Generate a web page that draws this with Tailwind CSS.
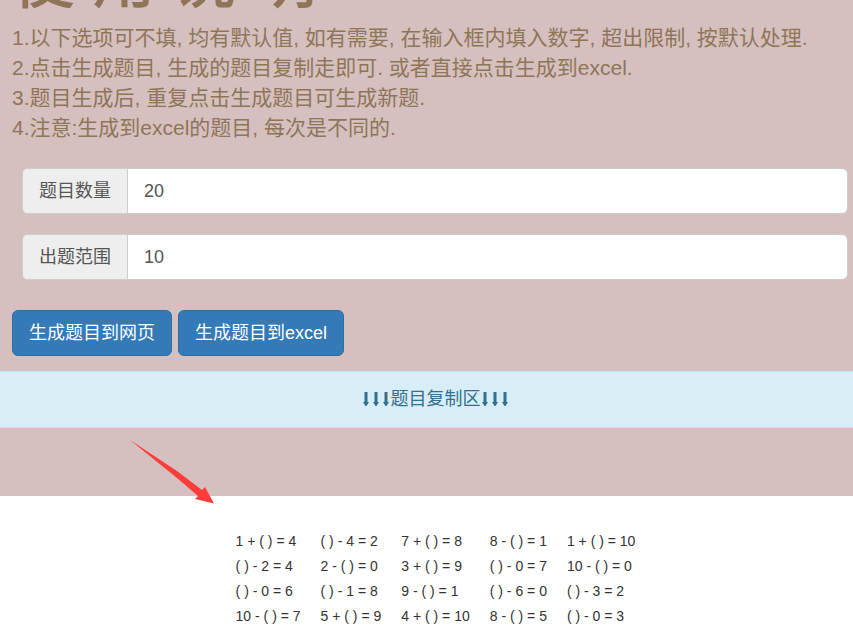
<!DOCTYPE html>
<html lang="zh-CN">
<head>
  <meta charset="UTF-8">
  <meta name="viewport" content="width=device-width, initial-scale=1.0">
  <title>使用说明</title>
  <script src="https://cdn.jsdelivr.net/npm/@tailwindcss/browser@4"></script>
</head>
<body class="bg-white overflow-hidden font-['Liberation_Sans','Noto_Sans_CJK_SC',sans-serif] text-[#333]">
  <main class="relative bg-[#d5c0bf] pb-[68px]">
    <header class="px-3 text-[#8f7558]">
      <div class="h-[23px] overflow-hidden flex items-end">
        <h1 class="pb-2 text-[63px] leading-[70px] font-medium whitespace-nowrap">使 用 说 明</h1>
      </div>
      <ol class="text-[21px] leading-[30px] whitespace-nowrap">
        <li>1.以下选项可不填, 均有默认值, 如有需要, 在输入框内填入数字, 超出限制, 按默认处理.</li>
        <li>2.点击生成题目, 生成的题目复制走即可. 或者直接点击生成到excel.</li>
        <li>3.题目生成后, 重复点击生成题目可生成新题.</li>
        <li>4.注意:生成到excel的题目, 每次是不同的.</li>
      </ol>
    </header>

    <form class="mt-[25px]" onsubmit="return false">
      <div class="ml-[22px] mr-[5px] space-y-5 text-lg text-[#555]">
        <div class="flex h-[46px] rounded-md border border-[#ccc] bg-white overflow-hidden">
          <label for="count" class="flex items-center px-4 bg-[#eee] border-r border-[#ccc] whitespace-nowrap">题目数量</label>
          <input id="count" type="text" value="20" class="flex-1 min-w-0 px-4 outline-none">
        </div>
        <div class="flex h-[46px] rounded-md border border-[#ccc] bg-white overflow-hidden">
          <label for="range" class="flex items-center px-4 bg-[#eee] border-r border-[#ccc] whitespace-nowrap">出题范围</label>
          <input id="range" type="text" value="10" class="flex-1 min-w-0 px-4 outline-none">
        </div>
      </div>
      <div class="mt-[30px] px-3 flex gap-1.5 text-lg text-white">
        <button type="button" class="h-[46px] px-4 rounded-md border border-[#2e6da4] bg-[#337ab7] hover:bg-[#286090]">生成题目到网页</button>
        <button type="button" class="h-[46px] px-4 rounded-md border border-[#2e6da4] bg-[#337ab7] hover:bg-[#286090]">生成题目到excel</button>
      </div>
    </form>

    <div class="mt-[15px] h-[57px] pl-[18px] pb-0.5 flex items-center justify-center border-y border-[#bce8f1] bg-[#d9edf7] text-lg text-[#31708f]">
      <svg class="w-[29px] h-4" viewBox="0 0 29 16" fill="currentColor" aria-hidden="true">
        <path d="M2.500 1h3v10h1.500l-2.500 4h-1l-2.500-4h1.500zM12.500 1h3v10h1.500l-2.500 4h-1l-2.500-4h1.500zM22.500 1h3v10h1.500l-2.500 4h-1l-2.500-4h1.500z"/>
      </svg>
      <span>题目复制区</span>
      <svg class="w-[29px] h-4" viewBox="0 0 29 16" fill="currentColor" aria-hidden="true">
        <path d="M2.500 1h3v10h1.500l-2.500 4h-1l-2.500-4h1.500zM12.500 1h3v10h1.500l-2.500 4h-1l-2.500-4h1.500zM22.500 1h3v10h1.500l-2.500 4h-1l-2.500-4h1.500z"/>
      </svg>
    </div>

    <!-- red pointer over the results -->
    <svg class="absolute left-[129px] -bottom-2 w-[86px] h-[65px]" viewBox="0 0 86 65" fill="#ff3b3b" aria-hidden="true">
      <path d="M1 1L48 32L73 51L76 48L85 64.500L66 60L69 57L48 39Z"/>
    </svg>
  </main>

  <section class="pt-[33px] pl-[18px] flex justify-center">
    <table class="text-sm leading-[25px] whitespace-nowrap">
      <tbody>
        <tr>
          <td class="px-2.5">1 + ( ) = 4</td>
          <td class="px-2.5">( ) - 4 = 2</td>
          <td class="px-2.5">7 + ( ) = 8</td>
          <td class="px-2.5">8 - ( ) = 1</td>
          <td class="px-2.5">1 + ( ) = 10</td>
        </tr>
        <tr>
          <td class="px-2.5">( ) - 2 = 4</td>
          <td class="px-2.5">2 - ( ) = 0</td>
          <td class="px-2.5">3 + ( ) = 9</td>
          <td class="px-2.5">( ) - 0 = 7</td>
          <td class="px-2.5">10 - ( ) = 0</td>
        </tr>
        <tr>
          <td class="px-2.5">( ) - 0 = 6</td>
          <td class="px-2.5">( ) - 1 = 8</td>
          <td class="px-2.5">9 - ( ) = 1</td>
          <td class="px-2.5">( ) - 6 = 0</td>
          <td class="px-2.5">( ) - 3 = 2</td>
        </tr>
        <tr>
          <td class="px-2.5">10 - ( ) = 7</td>
          <td class="px-2.5">5 + ( ) = 9</td>
          <td class="px-2.5">4 + ( ) = 10</td>
          <td class="px-2.5">8 - ( ) = 5</td>
          <td class="px-2.5">( ) - 0 = 3</td>
        </tr>
      </tbody>
    </table>
  </section>
</body>
</html>
